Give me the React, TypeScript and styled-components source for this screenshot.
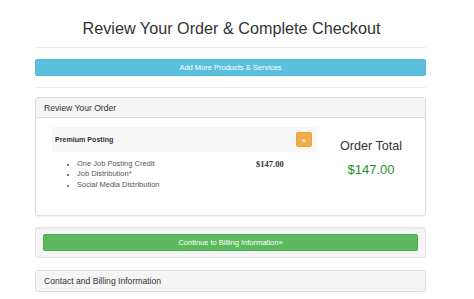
import React from "react";
import styled, { createGlobalStyle } from "styled-components";

const Global = createGlobalStyle`
  html, body { margin: 0; padding: 0; background: #fff; }
  body { font-family: "Liberation Sans", Arial, sans-serif; color: #333; }
  * { box-sizing: border-box; }
`;

const Page = styled.div`
  width: 391px;
  margin-left: 35px;
  display: flex;
  flex-direction: column;
`;

const Title = styled.h1`
  margin: 16px -2px 0 0;
  font-size: 16.2px;
  line-height: 24px;
  font-weight: 400;
  text-align: center;
  color: #333;
`;

const Rule = styled.div<{ $top: number }>`
  height: 1px;
  background: #eee;
  margin-top: ${(p) => p.$top}px;
`;

const ButtonSlot = styled.div`
  margin-top: 11px;
`;

const WideButton = styled.div<{ $bg: string; $border: string }>`
  height: 17px;
  border-radius: 2px;
  background: ${(p) => p.$bg};
  border: 1px solid ${(p) => p.$border};
  color: #fff;
  font-size: 7.5px;
  display: flex;
  align-items: center;
  justify-content: center;
`;

const Panel = styled.div<{ $top: number }>`
  margin-top: ${(p) => p.$top}px;
  border: 1px solid #ddd;
  border-radius: 3px;
  box-shadow: 0 1px 1px rgba(0, 0, 0, 0.05);
  background: #fff;
  overflow: hidden;
`;

const PanelHeading = styled.div<{ $last?: boolean }>`
  height: 20px;
  background: #f5f5f5;
  border-bottom: ${(p) => (p.$last ? "none" : "1px solid #ddd")};
  padding-left: 8px;
  display: flex;
  align-items: center;
  font-size: 8.6px;
  color: #333;
`;

const PanelBody = styled.div`
  display: flex;
  padding: 9px 0 0 16px;
  height: 97px;
`;

const LeftCol = styled.div`
  width: 265px;
  display: flex;
  flex-direction: column;
`;

const ItemHeader = styled.div`
  height: 25px;
  background: #f7f7f7;
  display: flex;
  align-items: center;
  justify-content: space-between;
  padding: 0 5px 0 3px;
  font-size: 7.1px;
  font-weight: 700;
  color: #333;
`;

const RemoveButton = styled.div`
  width: 16px;
  height: 15px;
  border-radius: 2px;
  background: #f0ad4e;
  border: 1px solid #eea236;
  color: #fff;
  font-size: 6px;
  display: flex;
  align-items: center;
  justify-content: center;
`;

const ItemBody = styled.div`
  display: flex;
  padding-top: 7px;
`;

const List = styled.ul`
  margin: 0;
  padding: 0 0 0 25px;
  width: 204px;
  list-style: disc;
  font-size: 7.5px;
  line-height: 10.3px;
  color: #555;
  li::marker { font-size: 6px; }
`;

const Price = styled.div`
  font-family: "Liberation Serif", "Times New Roman", serif;
  font-weight: 700;
  font-size: 8.5px;
  line-height: 10.3px;
  color: #333;
`;

const RightCol = styled.div`
  flex: 1;
  display: flex;
  flex-direction: column;
  align-items: center;
  padding-top: 11px;
`;

const TotalLabel = styled.div`
  font-size: 12.6px;
  line-height: 16px;
  color: #333;
`;

const TotalValue = styled.div`
  margin-top: 8px;
  font-size: 13px;
  line-height: 16px;
  color: #23932a;
`;

const Well = styled.div`
  margin-top: 11px;
  background: #f5f5f5;
  border: 1px solid #e3e3e3;
  border-radius: 3px;
  box-shadow: inset 0 1px 1px rgba(0, 0, 0, 0.05);
  padding: 6px 7px;
`;

export default function App() {
  return (
    <>
      <Global />
      <Page>
        <Title>Review Your Order &amp; Complete Checkout</Title>
        <Rule $top={7} />
        <ButtonSlot>
          <WideButton $bg="#5bc0de" $border="#52b6d4">
            Add More Products &amp; Services
          </WideButton>
        </ButtonSlot>
        <Rule $top={11} />
        <Panel $top={9}>
          <PanelHeading>Review Your Order</PanelHeading>
          <PanelBody>
            <LeftCol>
              <ItemHeader>
                <span>Premium Posting</span>
                <RemoveButton>x</RemoveButton>
              </ItemHeader>
              <ItemBody>
                <List>
                  <li>One Job Posting Credit</li>
                  <li>Job Distribution*</li>
                  <li>Social Media Distribution</li>
                </List>
                <Price>$147.00</Price>
              </ItemBody>
            </LeftCol>
            <RightCol>
              <TotalLabel>Order Total</TotalLabel>
              <TotalValue>$147.00</TotalValue>
            </RightCol>
          </PanelBody>
        </Panel>
        <Well>
          <WideButton $bg="#5cb85c" $border="#4cae4c">
            Continue to Billing Information»
          </WideButton>
        </Well>
        <Panel $top={12}>
          <PanelHeading $last>Contact and Billing Information</PanelHeading>
        </Panel>
      </Page>
    </>
  );
}
